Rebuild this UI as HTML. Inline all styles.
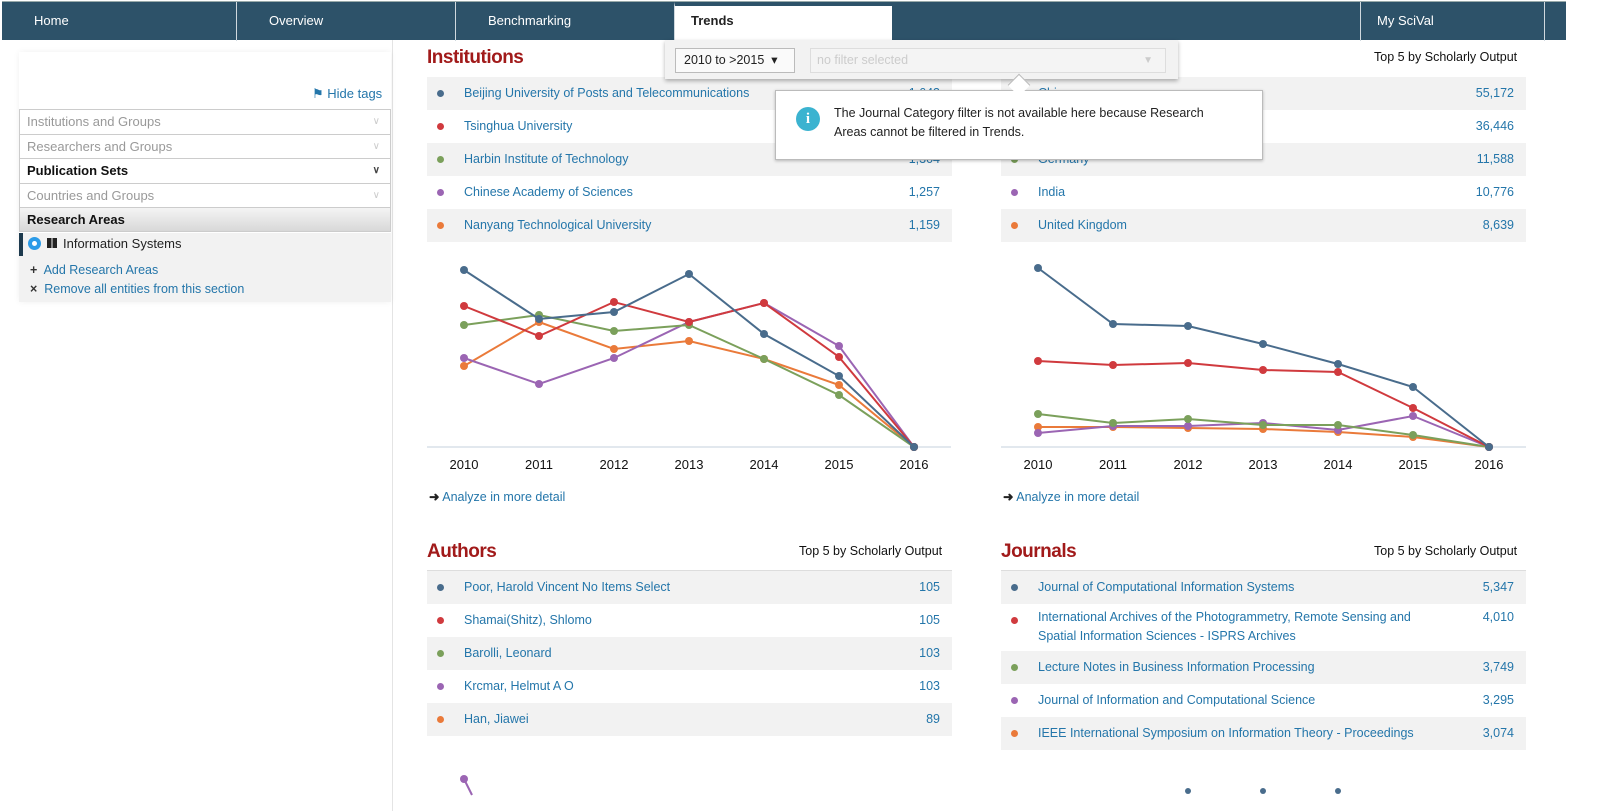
<!DOCTYPE html>
<html><head><meta charset="utf-8"><style>
*{box-sizing:border-box;margin:0;padding:0}
body{width:1608px;height:811px;overflow:hidden;background:#fff;font-family:"Liberation Sans",sans-serif;font-size:12.5px;color:#222;position:relative}
.a{position:absolute;white-space:nowrap}
.nav{position:absolute;top:1px;left:2px;width:1564px;height:39px;background:#2d5269;border-top:1px solid #9aa}
.nav div{position:absolute;top:0;height:39px;color:#fff;font-size:13px;line-height:38px;padding-left:32px;border-left:1px solid #cfd8de}
.lnk{color:#2476aa}
.row{position:absolute;height:33px;line-height:33px;color:#2476aa}
.row.g{background:#f2f2f2}
.row .d{position:absolute;left:10px;top:13px;width:7px;height:7px;border-radius:50%}
.row .t{position:absolute;left:37px}
.row .n{position:absolute;right:12px}
.h{position:absolute;color:#a11a1a;font-size:19px;font-weight:bold;letter-spacing:-0.5px}
.sb{position:absolute;left:19px;width:372px;height:25px;border:1px solid #ccc;border-bottom:none;line-height:23px;padding-left:7px;color:#999;font-size:13px;background:#fff}
.sb span{position:absolute;right:10px;color:#ccc;font-size:10px}
</style></head><body>
<div class="nav">
<div style="left:0;width:234px;border-left:none">Home</div>
<div style="left:234px;width:219px">Overview</div>
<div style="left:453px;width:219px">Benchmarking</div>
<div style="left:672px;width:218px;background:#fff;color:#222;font-weight:bold;border-top:4px solid #2d5269;line-height:30px;padding-left:16px">Trends</div>
<div style="left:1358px;width:184px;padding-left:16px">My SciVal</div>
<div style="left:1542px;width:22px"></div>
</div>
<!-- sidebar -->
<div class="a" style="left:392px;top:40px;width:1px;height:771px;background:#e4e4e4"></div>
<div class="a" style="left:19px;top:52px;width:372px;height:250px;background:#fff;box-shadow:0 0 6px rgba(0,0,0,.06)"></div>
<div class="a lnk" style="left:312px;top:86px;font-size:13px">&#9873; Hide tags</div>
<div class="sb" style="top:109px">Institutions and Groups<span>&#8744;</span></div>
<div class="sb" style="top:134px">Researchers and Groups<span>&#8744;</span></div>
<div class="sb" style="top:158px;color:#111;font-weight:bold">Publication Sets<span style="color:#444">&#8744;</span></div>
<div class="sb" style="top:183px">Countries and Groups<span>&#8744;</span></div>
<div class="sb" style="top:207px;color:#111;font-weight:bold;background:linear-gradient(#f4f4f4,#d8d8d8);border-bottom:1px solid #ccc">Research Areas</div>
<div class="a" style="left:19px;top:233px;width:372px;height:69px;background:#f2f2f2"></div>
<div class="a" style="left:19px;top:233px;width:4px;height:23px;background:#1d3a4e"></div>
<div class="a" style="left:28px;top:237px;width:13px;height:13px;border-radius:50%;background:#2b9be8;border:3px solid #2b9be8"><div style="width:5px;height:5px;background:#fff;border-radius:50%;margin:1px"></div></div>
<div class="a" style="left:47px;top:238px;width:10px;height:10px;background:linear-gradient(90deg,#222 45%,transparent 45%,transparent 55%,#222 55%)"></div>
<div class="a" style="left:63px;top:236px;font-size:13px">Information Systems</div>
<div class="a lnk" style="left:30px;top:263px"><b style="color:#333">+</b>&nbsp; Add Research Areas</div>
<div class="a lnk" style="left:30px;top:282px"><b style="color:#333">×</b>&nbsp; Remove all entities from this section</div>
<!-- Institutions -->
<div class="h" style="left:427px;top:47px">Institutions</div>
<div class="a" style="left:427px;top:77px;width:525px;height:2px;background:#ddd"></div>
<div class="row g" style="left:427px;top:77px;width:525px"><i class="d" style="background:#496c8c"></i><span class="t">Beijing University of Posts and Telecommunications</span><span class="n">1,643</span></div>
<div class="row" style="left:427px;top:110px;width:525px"><i class="d" style="background:#d03a3e"></i><span class="t">Tsinghua University</span><span class="n">1,504</span></div>
<div class="row g" style="left:427px;top:143px;width:525px"><i class="d" style="background:#7ba05b"></i><span class="t">Harbin Institute of Technology</span><span class="n">1,304</span></div>
<div class="row" style="left:427px;top:176px;width:525px"><i class="d" style="background:#9b65b3"></i><span class="t">Chinese Academy of Sciences</span><span class="n">1,257</span></div>
<div class="row g" style="left:427px;top:209px;width:525px"><i class="d" style="background:#ea7a3a"></i><span class="t">Nanyang Technological University</span><span class="n">1,159</span></div>
<div class="a" style="left:1374px;top:50px;color:#111">Top 5 by Scholarly Output</div>
<div class="a" style="left:1001px;top:77px;width:525px;height:2px;background:#ddd"></div>
<div class="row g" style="left:1001px;top:77px;width:525px"><i class="d" style="background:#496c8c"></i><span class="t">China</span><span class="n">55,172</span></div>
<div class="row" style="left:1001px;top:110px;width:525px"><i class="d" style="background:#d03a3e"></i><span class="t">United States</span><span class="n">36,446</span></div>
<div class="row g" style="left:1001px;top:143px;width:525px"><i class="d" style="background:#7ba05b"></i><span class="t">Germany</span><span class="n">11,588</span></div>
<div class="row" style="left:1001px;top:176px;width:525px"><i class="d" style="background:#9b65b3"></i><span class="t">India</span><span class="n">10,776</span></div>
<div class="row g" style="left:1001px;top:209px;width:525px"><i class="d" style="background:#ea7a3a"></i><span class="t">United Kingdom</span><span class="n">8,639</span></div>
<div class="a lnk" style="left:429px;top:489px"><b style="color:#222">&#10140;</b> Analyze in more detail</div>
<div class="a lnk" style="left:1003px;top:489px"><b style="color:#222">&#10140;</b> Analyze in more detail</div>
<!-- Authors / Journals -->
<div class="h" style="left:427px;top:541px">Authors</div>
<div class="a" style="left:799px;top:544px;color:#111">Top 5 by Scholarly Output</div>
<div class="a" style="left:427px;top:570px;width:525px;height:2px;background:#ddd"></div>
<div class="row g" style="left:427px;top:571px;width:525px"><i class="d" style="background:#496c8c"></i><span class="t">Poor, Harold Vincent No Items Select</span><span class="n">105</span></div>
<div class="row" style="left:427px;top:604px;width:525px"><i class="d" style="background:#d03a3e"></i><span class="t">Shamai(Shitz), Shlomo</span><span class="n">105</span></div>
<div class="row g" style="left:427px;top:637px;width:525px"><i class="d" style="background:#7ba05b"></i><span class="t">Barolli, Leonard</span><span class="n">103</span></div>
<div class="row" style="left:427px;top:670px;width:525px"><i class="d" style="background:#9b65b3"></i><span class="t">Krcmar, Helmut A O</span><span class="n">103</span></div>
<div class="row g" style="left:427px;top:703px;width:525px"><i class="d" style="background:#ea7a3a"></i><span class="t">Han, Jiawei</span><span class="n">89</span></div>
<div class="h" style="left:1001px;top:541px">Journals</div>
<div class="a" style="left:1374px;top:544px;color:#111">Top 5 by Scholarly Output</div>
<div class="a" style="left:1001px;top:570px;width:525px;height:2px;background:#ddd"></div>
<div class="row g" style="left:1001px;top:571px;width:525px"><i class="d" style="background:#496c8c"></i><span class="t">Journal of Computational Information Systems</span><span class="n">5,347</span></div>
<div class="row" style="left:1001px;top:604px;width:525px;height:47px;line-height:19px;padding-top:4px"><i class="d" style="background:#d03a3e"></i><span class="t">International Archives of the Photogrammetry, Remote Sensing and<br>Spatial Information Sciences - ISPRS Archives</span><span class="n">4,010</span></div>
<div class="row g" style="left:1001px;top:651px;width:525px"><i class="d" style="background:#7ba05b"></i><span class="t">Lecture Notes in Business Information Processing</span><span class="n">3,749</span></div>
<div class="row" style="left:1001px;top:684px;width:525px"><i class="d" style="background:#9b65b3"></i><span class="t">Journal of Information and Computational Science</span><span class="n">3,295</span></div>
<div class="row g" style="left:1001px;top:717px;width:525px"><i class="d" style="background:#ea7a3a"></i><span class="t">IEEE International Symposium on Information Theory - Proceedings</span><span class="n">3,074</span></div>
<!-- charts -->
<svg class="a" style="left:0;top:0" width="1608" height="811" font-family="Liberation Sans" font-size="13">
<g stroke-width="2" fill="none">
<line x1="427" y1="447" x2="951" y2="447" stroke="#c5d0dc" stroke-width="1"/>
<line x1="1001" y1="447" x2="1526" y2="447" stroke="#c5d0dc" stroke-width="1"/>
</g>
<g text-anchor="middle" fill="#111">
<text x="464" y="469">2010</text><text x="539" y="469">2011</text><text x="614" y="469">2012</text><text x="689" y="469">2013</text><text x="764" y="469">2014</text><text x="839" y="469">2015</text><text x="914" y="469">2016</text>
<text x="1038" y="469">2010</text><text x="1113" y="469">2011</text><text x="1188" y="469">2012</text><text x="1263" y="469">2013</text><text x="1338" y="469">2014</text><text x="1413" y="469">2015</text><text x="1489" y="469">2016</text>
</g>
<g id="L"></g>
<polyline points="464,779 472,795" stroke="#9b65b3" stroke-width="2" fill="none"/><circle cx="464" cy="779" r="4" fill="#9b65b3"/>
<circle cx="1188" cy="791" r="3" fill="#496c8c"/><circle cx="1263" cy="791" r="3" fill="#496c8c"/><circle cx="1338" cy="791" r="3" fill="#496c8c"/>
</svg>
<!-- popup -->
<div class="a" style="left:665px;top:40px;width:513px;height:39px;background:#f2f2f2;box-shadow:0 2px 4px rgba(0,0,0,.3)"></div>
<div class="a" style="left:675px;top:48px;width:120px;height:25px;border:1px solid #bbb;background:#fafafa;line-height:23px;padding-left:8px;font-size:12.5px">2010 to &gt;2015 &nbsp;&#9662;</div>
<div class="a" style="left:810px;top:48px;width:356px;height:25px;border:1px solid #ddd;background:#f4f4f4;line-height:23px;padding-left:6px;color:#ccc">no filter selected<span style="position:absolute;right:12px;font-size:10px">&#9660;</span></div>
<div class="a" style="left:775px;top:90px;width:488px;height:70px;background:#fff;border:1px solid #bbb;box-shadow:0 1px 3px rgba(0,0,0,.25)"></div>
<div class="a" style="left:1011px;top:77px;width:16px;height:16px;background:#fff;border-left:1px solid #bbb;border-top:1px solid #bbb;transform:rotate(45deg)"></div>
<div class="a" style="left:796px;top:107px;width:24px;height:24px;border-radius:50%;background:#3bb3d0;color:#fff;font-weight:bold;text-align:center;line-height:24px;font-size:15px;font-family:'Liberation Serif',serif">i</div>
<div class="a" style="left:834px;top:104px;line-height:19px;font-size:12.5px">The Journal Category filter is not available here because Research<br>Areas cannot be filtered in Trends.</div>
<script>
var g=document.getElementById('L'),C=['#496c8c','#d03a3e','#7ba05b','#9b65b3','#ea7a3a'];
function draw(xs,sets){for(var k=sets.length-1;k>=0;k--){var c=C[k],p=sets[k].map(function(y,i){return xs[i]+','+y}).join(' ');
var s='<polyline points="'+p+'" fill="none" stroke="'+c+'" stroke-width="2"/>';
sets[k].forEach(function(y,i){s+='<circle cx="'+xs[i]+'" cy="'+y+'" r="4" fill="'+c+'"/>'});g.insertAdjacentHTML('beforeend',s)}}
var X1=[464,539,614,689,764,839,914],X2=[1038,1113,1188,1263,1338,1413,1489];
draw(X1,[[270,319,312,274,334,376,447],[306,336,302,322,303,357,447],[325,315,331,325,359,395,447],[358,384,358,322,303,346,447],[366,322,349,341,359,385,447]]);
draw(X2,[[268,324,326,344,364,387,447],[361,365,363,370,372,408,447],[414,423,419,425,425,435,447],[433,426,426,423,430,416,447],[427,427,428,429,432,437,447]]);
g.innerHTML=g.innerHTML;
</script>
</body></html>
